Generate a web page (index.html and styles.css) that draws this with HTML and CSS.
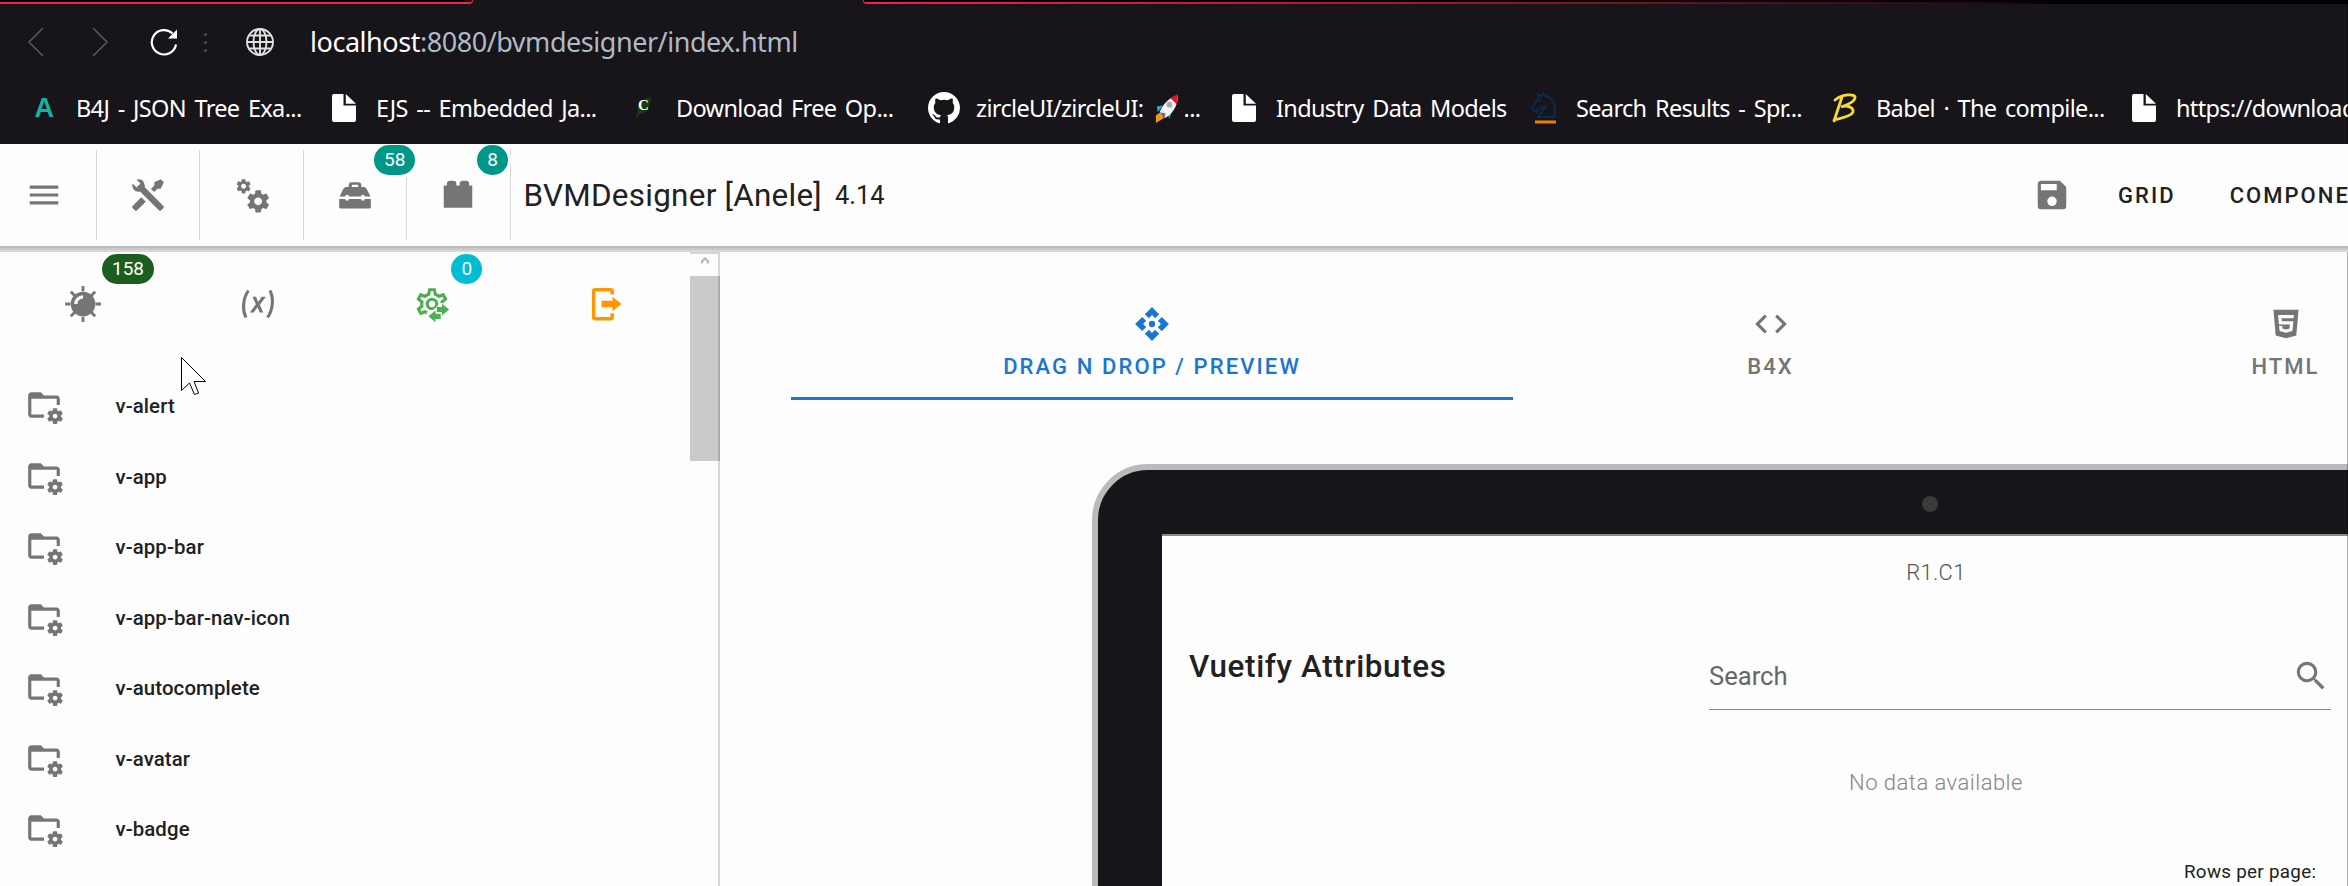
FILE: index.html
```html
<!DOCTYPE html>
<html lang="en">
<head>
  <meta charset="UTF-8">
  <title>BVMDesigner</title>
  <meta name="viewport" content="width=device-width, initial-scale=1.0">
  <link rel="stylesheet" href="styles.css">
</head>
<body>

  <!-- icons used more than once -->
  <svg class="sprite">
    <symbol id="folder-cog" viewBox="0 0 24 24"><path d="M4 4C2.89 4 2 4.89 2 6V18C2 19.11 2.9 20 4 20H12V18H4V8H20V12H22V8C22 6.89 21.1 6 20 6H12L10 4M18 14C17.87 14 17.76 14.09 17.74 14.21L17.55 15.53C17.25 15.66 16.96 15.82 16.7 16L15.46 15.5C15.35 15.5 15.22 15.5 15.15 15.63L14.15 17.36C14.09 17.47 14.11 17.6 14.21 17.68L15.27 18.5C15.25 18.67 15.24 18.83 15.24 19C15.24 19.17 15.25 19.33 15.27 19.5L14.21 20.32C14.12 20.4 14.09 20.53 14.15 20.64L15.15 22.37C15.21 22.5 15.34 22.5 15.46 22.5L16.7 22C16.96 22.18 17.24 22.35 17.55 22.47L17.74 23.79C17.76 23.91 17.86 24 18 24H20C20.11 24 20.22 23.91 20.24 23.79L20.43 22.47C20.73 22.34 21 22.18 21.27 22L22.5 22.5C22.63 22.5 22.76 22.5 22.83 22.37L23.83 20.64C23.89 20.53 23.86 20.4 23.77 20.32L22.7 19.5C22.72 19.33 22.74 19.17 22.74 19C22.74 18.83 22.73 18.67 22.7 18.5L23.76 17.68C23.85 17.6 23.88 17.47 23.82 17.36L22.82 15.63C22.76 15.5 22.63 15.5 22.5 15.5L21.27 16C21 15.82 20.73 15.65 20.42 15.53L20.23 14.21C20.22 14.09 20.11 14 20 14M19 17.5C19.83 17.5 20.5 18.17 20.5 19C20.5 19.83 19.83 20.5 19 20.5C18.16 20.5 17.5 19.83 17.5 19C17.5 18.17 18.17 17.5 19 17.5Z"/></symbol>
    <symbol id="page" viewBox="0 0 32 32"><path d="M5.500 2H15.500V13.500H28V28A2 2 0 0 1 26 30H6A2 2 0 0 1 4 28V4A2 2 0 0 1 6 2ZM17.800 2L28 11.700H17.800Z"/></symbol>
  </svg>

  <div class="browser">
    <div class="tabstrip">
      <div class="tab-left"></div>
      <div class="tab-right"></div>
    </div>
    <div class="address">
      <svg class="nav back" viewBox="0 0 18 30"><path d="M16 1L2 15L16 29"/></svg>
      <svg class="nav forward" viewBox="0 0 18 30"><path d="M2 1L16 15L2 29"/></svg>
      <svg class="reload" viewBox="0 0 28 28"><path class="arc" d="M22.500 5.500A12.200 12.200 0 1 0 26 16.500"/><path class="tip" d="M27 1.500V10.500H18Z"/></svg>
      <div class="dots"><i></i><i></i><i></i></div>
      <svg class="globe" viewBox="0 0 28 28"><circle cx="14" cy="14" r="13"/><ellipse cx="14" cy="14" rx="6.500" ry="13"/><path d="M14 1V27M1 14H27M3 7.500H25M3 20.500H25"/></svg>
      <span class="url"><b>localhost</b>:8080/bvmdesigner/index.html</span>
    </div>
    <div class="bookmarks">
      <a class="bookmark"><span class="fav fav-a">A</span><span>B4J - JSON Tree Exa...</span></a>
      <a class="bookmark"><svg class="fav"><use href="#page"/></svg><span>EJS -- Embedded Ja...</span></a>
      <a class="bookmark">
        <span class="fav fav-leaf"><svg viewBox="0 0 32 32"><path d="M23 5C13 6 8 13 9.500 20C8.500 23 8 26 8.500 28C10 25 10 23 12 22C20 21 22 14 23 5Z"/></svg><em>C</em></span>
        <span>Download Free Op...</span>
      </a>
      <a class="bookmark"><svg class="fav" viewBox="0 0 16 16"><path d="M8 0C3.580 0 0 3.580 0 8c0 3.540 2.290 6.530 5.470 7.590.4.070.550-.170.550-.380 0-.190-.010-.820-.010-1.490-2.010.370-2.530-.490-2.690-.940-.090-.230-.480-.940-.820-1.130-.280-.150-.680-.520-.010-.530.630-.010 1.080.580 1.230.820.720 1.210 1.870.870 2.330.660.070-.520.280-.870.510-1.070-1.780-.2-3.640-.890-3.640-3.950 0-.870.310-1.590.820-2.150-.080-.2-.360-1.020.080-2.120 0 0 .670-.210 2.200.820.640-.180 1.320-.270 2-.270s1.360.090 2 .270c1.530-1.040 2.200-.820 2.200-.820.440 1.100.160 1.920.080 2.120.510.560.820 1.270.820 2.150 0 3.070-1.870 3.750-3.650 3.950.290.250.540.730.540 1.480 0 1.070-.010 1.930-.010 2.200 0 .210.150.460.550.380A8.010 8.010 0 0 0 16 8c0-4.420-3.580-8-8-8z"/></svg>
        <span>zircleUI/zircleUI:</span>
        <svg class="rocket" viewBox="0 0 28 32"><path d="M4 14L10 13L5 20ZM15 21L20 17L17 27Z" fill="#2aa9e0"/><path d="M3 23L8 20L11 26L3 31Z" fill="#f7941d"/><path d="M24 3C16 5 9 13 7 20L12 26C20 22 25 14 26 4Z" fill="#f4f4f6"/><path d="M26 1L18 5L25 12Z" fill="#e81123"/><circle cx="17" cy="12" r="3" fill="#a9a9b0"/><path d="M7 20L12 26L13 21Z" fill="#6d6d74"/></svg>
        <span>...</span>
      </a>
      <a class="bookmark"><svg class="fav"><use href="#page"/></svg><span>Industry Data Models</span></a>
      <a class="bookmark"><svg class="fav knight" viewBox="0 0 32 32"><path d="M9 25H27M11 24C13 20 17 18 18 13C15 17 12 16 9 18C7 21 3 18 5 14L10 7V2L13 5L15 1L17 4C25 5 29 14 26 24M10 9L13 8M11 19L8 21"/><path class="bar" d="M7 30H28"/></svg><span>Search Results - Spr...</span></a>
      <a class="bookmark"><svg class="fav babel" viewBox="0 0 32 32"><path d="M14 5L6 29M7 8C14 2 28 1 27 6C26 11 18 13 13 15C19 13 26 15 25 20C23 25 12 26 6 28"/></svg><span>Babel · The compile...</span></a>
      <a class="bookmark"><svg class="fav"><use href="#page"/></svg><span>https://download</span></a>
    </div>
  </div>

  <div class="app-bar">
    <div class="bar-inner">
      <div class="bar-btn first"><svg class="icon" viewBox="0 0 24 24"><path d="M3,6H21V8H3V6M3,11H21V13H3V11M3,16H21V18H3V16Z"/></svg></div>
      <div class="bar-btn"><svg class="icon" viewBox="0 0 24 24"><path d="M21.710 20.290L20.290 21.710A1 1 0 0 1 18.880 21.710L7 9.850A3.810 3.810 0 0 1 6 10A4 4 0 0 1 2.220 4.700L4.760 7.240L5.290 6.710L6.710 5.290L7.240 4.760L4.700 2.220A4 4 0 0 1 10 6A3.810 3.810 0 0 1 9.850 7L21.710 18.880A1 1 0 0 1 21.710 20.290M2.290 18.880A1 1 0 0 0 2.290 20.290L3.710 21.710A1 1 0 0 0 5.120 21.710L10.590 16.250L7.760 13.420M20 2L16 4V6L13.830 8.170L15.830 10.170L18 8H20L22 4Z"/></svg></div>
      <div class="bar-btn"><svg class="icon" viewBox="0 0 24 24"><path d="M15.900,18.450C17.250,18.450 18.350,17.350 18.350,16C18.350,14.650 17.250,13.550 15.900,13.550C14.540,13.550 13.450,14.650 13.450,16C13.450,17.350 14.540,18.450 15.900,18.450M21.100,16.680L22.580,17.840C22.710,17.950 22.750,18.130 22.660,18.290L21.260,20.710C21.170,20.860 21,20.920 20.830,20.860L19.090,20.160C18.730,20.440 18.330,20.670 17.910,20.850L17.640,22.700C17.620,22.870 17.470,23 17.300,23H14.500C14.320,23 14.180,22.870 14.150,22.700L13.890,20.850C13.460,20.670 13.070,20.440 12.710,20.160L10.960,20.860C10.810,20.920 10.620,20.860 10.540,20.710L9.140,18.290C9.050,18.130 9.090,17.950 9.220,17.840L10.700,16.680L10.650,16L10.700,15.310L9.220,14.160C9.090,14.050 9.050,13.860 9.140,13.710L10.540,11.290C10.620,11.130 10.810,11.070 10.960,11.130L12.710,11.840C13.070,11.560 13.460,11.320 13.890,11.150L14.150,9.290C14.180,9.130 14.320,9 14.500,9H17.300C17.470,9 17.620,9.130 17.640,9.290L17.910,11.150C18.330,11.320 18.730,11.560 19.090,11.840L20.830,11.130C21,11.070 21.170,11.130 21.260,11.290L22.660,13.710C22.750,13.860 22.710,14.050 22.580,14.160L21.100,15.310L21.150,16L21.100,16.680M6.690,8.070C7.560,8.070 8.260,7.370 8.260,6.500C8.260,5.630 7.560,4.920 6.690,4.920A1.580,1.580 0 0,0 5.110,6.500C5.110,7.370 5.820,8.070 6.690,8.070M10.030,6.940L11,7.680C11.070,7.750 11.090,7.870 11.030,7.970L10.130,9.530C10.080,9.630 9.960,9.670 9.860,9.630L8.740,9.180L8,9.620L7.810,10.810C7.790,10.920 7.700,11 7.590,11H5.790C5.670,11 5.580,10.920 5.560,10.810L5.400,9.620L4.640,9.180L3.520,9.630C3.410,9.670 3.300,9.630 3.240,9.530L2.340,7.970C2.280,7.870 2.310,7.750 2.390,7.680L3.340,6.940L3.310,6.500L3.340,6.060L2.390,5.320C2.310,5.250 2.280,5.130 2.340,5.030L3.240,3.470C3.300,3.370 3.410,3.330 3.520,3.380L4.630,3.820L5.400,3.380L5.560,2.190C5.580,2.080 5.670,2 5.790,2H7.590C7.700,2 7.790,2.080 7.810,2.190L8,3.380L8.740,3.820L9.860,3.380C9.960,3.330 10.080,3.370 10.130,3.470L11.030,5.030C11.090,5.130 11.070,5.250 11,5.320L10.030,6.060L10.060,6.500L10.030,6.940Z"/></svg></div>
      <div class="bar-btn"><span class="badged"><svg class="icon" viewBox="0 0 24 24"><path d="M16 7V6A2 2 0 0 0 14 4H10A2 2 0 0 0 8 6V7H6.500A2 2 0 0 0 4.700 8L2.200 13H6V12H8V13H16V12H18V13H21.800L19.300 8A2 2 0 0 0 17.500 7ZM10 5.500H14V7H10ZM2 14.500H6V15.500H8V14.500H16V15.500H18V14.500H22V19.500A1 1 0 0 1 21 20.500H3A1 1 0 0 1 2 19.500Z"/></svg><span class="badge teal">58</span></span></div>
      <div class="bar-btn"><span class="badged"><svg class="icon" viewBox="0 0 24 24"><path d="M19,6V5A2,2 0 0,0 17,3H15A2,2 0 0,0 13,5V6H11V5A2,2 0 0,0 9,3H7A2,2 0 0,0 5,5V6H3V20H21V6H19Z"/></svg><span class="badge teal">8</span></span></div>
      <h1 class="title">BVMDesigner [Anele]</h1>
      <span class="version">4.14</span>
      <div class="bar-right">
        <svg class="icon" viewBox="0 0 24 24"><path d="M15,9H5V5H15M12,19A3,3 0 0,1 9,16A3,3 0 0,1 12,13A3,3 0 0,1 15,16A3,3 0 0,1 12,19M17,3H5C3.890,3 3,3.900 3,5V19A2,2 0 0,0 5,21H19A2,2 0 0,0 21,19V7L17,3Z"/></svg>
        <span class="text-btn">GRID</span>
        <span class="text-btn">COMPONENTS</span>
      </div>
    </div>
  </div>

  <div class="content">
    <div class="drawer">
      <div class="drawer-body">
        <div class="drawer-tools">
          <span class="badged"><svg class="icon mine" viewBox="0 0 24 24"><circle cx="12" cy="12" r="7.800"/><path class="spikes" d="M12 .700V4M12 20V23.300M.700 12H4M20 12H23.300M4.300 4.300L7 7M17 17L19.700 19.700M19.700 4.300L17 7M7 17L4.300 19.700"/><path class="shine" d="M6.500 12A5.500 5.500 0 0 1 12 6.500V8.500A3.500 3.500 0 0 0 8.500 12Z"/></svg><span class="badge green">158</span></span>
          <span class="badged"><svg class="icon" viewBox="0 0 24 24"><path d="M20.410,3C21.800,5.710 22.350,8.840 22,12C21.800,15.160 20.700,18.290 18.830,21L17.300,20C18.910,17.570 19.850,14.800 20,12C20.340,9.200 19.890,6.430 18.700,4L20.410,3M5.170,3L6.700,4C5.090,6.430 4.150,9.200 4,12C3.660,14.800 4.120,17.570 5.300,20L3.610,21C2.210,18.290 1.650,15.170 2,12C2.200,8.840 3.300,5.710 5.170,3M12.080,10.680L14.400,7.450H16.930L13.150,12.450L15.350,17.370H13.090L11.710,14L9.280,17.330H6.760L10.660,12.210L8.530,7.450H10.800L12.080,10.680Z"/></svg></span>
          <span class="badged"><svg class="icon transfer" viewBox="0 0 24 24"><path d="M12,8A4,4 0 0,1 16,12A4,4 0 0,1 12,16A4,4 0 0,1 8,12A4,4 0 0,1 12,8M12,10A2,2 0 0,0 10,12A2,2 0 0,0 12,14A2,2 0 0,0 14,12A2,2 0 0,0 12,10M10,22C9.750,22 9.540,21.820 9.500,21.580L9.130,18.930C8.500,18.680 7.960,18.340 7.440,17.940L4.950,18.950C4.730,19.030 4.460,18.950 4.340,18.730L2.340,15.270C2.210,15.050 2.270,14.780 2.460,14.630L4.570,12.970L4.500,12L4.570,11L2.460,9.370C2.270,9.220 2.210,8.950 2.340,8.730L4.340,5.270C4.460,5.050 4.730,4.960 4.950,5.050L7.440,6.050C7.960,5.660 8.500,5.320 9.130,5.070L9.500,2.420C9.540,2.180 9.750,2 10,2H14C14.250,2 14.460,2.180 14.500,2.420L14.870,5.070C15.500,5.320 16.040,5.660 16.560,6.050L19.050,5.050C19.270,4.960 19.540,5.050 19.660,5.270L21.660,8.730C21.790,8.950 21.730,9.220 21.540,9.370L19.430,11L19.500,12L19.430,13L21.540,14.630C21.730,14.780 21.790,15.050 21.660,15.270L19.660,18.730C19.540,18.950 19.270,19.040 19.050,18.950L16.560,17.950C16.040,18.340 15.500,18.680 14.870,18.930L14.500,21.580C14.460,21.820 14.250,22 14,22H10M11.250,4L10.880,6.610C9.680,6.860 8.620,7.500 7.850,8.390L5.440,7.350L4.690,8.650L6.800,10.200C6.400,11.370 6.400,12.640 6.800,13.800L4.680,15.360L5.430,16.660L7.860,15.620C8.630,16.500 9.680,17.140 10.870,17.380L11.240,20H12.760L13.130,17.390C14.320,17.140 15.370,16.500 16.140,15.620L18.570,16.660L19.320,15.360L17.200,13.810C17.600,12.640 17.600,11.370 17.200,10.200L19.310,8.650L18.560,7.350L16.150,8.390C15.380,7.500 14.320,6.860 13.120,6.620L12.750,4H11.250Z"/><path class="cut" d="M17.500 11.300H24V24H8.500V17.500L13 15.500Z"/><path d="M18.300 11.800L22.800 15.500L18.300 19.200V17.100H15V13.900H18.300ZM14.200 16.100L9.700 19.800L14.200 23.500V21.400H17.500V18.200H14.200Z"/></svg><span class="badge cyan">0</span></span>
          <span class="badged"><svg class="icon exit" viewBox="0 0 24 24"><path class="frame" d="M15.300 6V4A1 1 0 0 0 14.300 3H4.600A1 1 0 0 0 3.600 4V20.300A1 1 0 0 0 4.600 21.300H14.300A1 1 0 0 0 15.300 20.300V17.800"/><path class="gap" d="M13 6.500H17V17H13Z"/><path d="M8.600 10H15.500V7.400L21.200 12L15.500 16.600V14H8.600Z"/></svg></span>
        </div>
        <ul class="list">
          <li><svg class="icon"><use href="#folder-cog"/></svg><span>v-alert</span></li>
          <li><svg class="icon"><use href="#folder-cog"/></svg><span>v-app</span></li>
          <li><svg class="icon"><use href="#folder-cog"/></svg><span>v-app-bar</span></li>
          <li><svg class="icon"><use href="#folder-cog"/></svg><span>v-app-bar-nav-icon</span></li>
          <li><svg class="icon"><use href="#folder-cog"/></svg><span>v-autocomplete</span></li>
          <li><svg class="icon"><use href="#folder-cog"/></svg><span>v-avatar</span></li>
          <li><svg class="icon"><use href="#folder-cog"/></svg><span>v-badge</span></li>
        </ul>
      </div>
      <div class="scrollbar">
        <div class="scroll-cap"></div>
        <svg class="scroll-arrow" viewBox="0 0 8 8"><path d="M1 6.500V4.500L4 1.500L7 4.500V6.500"/></svg>
        <div class="scroll-thumb"></div>
      </div>
    </div>

    <div class="main">
      <div class="tabs">
        <div class="tab active">
          <svg class="icon" viewBox="0 0 24 24"><path d="M22.670,12L18.180,16.500L15.670,14L17.650,12L15.670,10.040L18.180,7.530L22.670,12M12,1.330L16.470,5.820L13.960,8.330L12,6.350L10,8.330L7.500,5.820L12,1.330M12,22.670L7.530,18.180L10.040,15.670L12,17.650L13.960,15.670L16.470,18.180L12,22.670M1.330,12L5.820,7.500L8.330,10L6.350,12L8.330,13.960L5.820,16.470L1.330,12M12,10A2,2 0 0,1 14,12A2,2 0 0,1 12,14A2,2 0 0,1 10,12A2,2 0 0,1 12,10Z"/></svg>
          <span>DRAG N DROP / PREVIEW</span>
        </div>
        <div class="tab">
          <svg class="icon" viewBox="0 0 24 24"><path d="M14.600,16.600L19.200,12L14.600,7.400L16,6L22,12L16,18L14.600,16.600M9.400,16.600L4.800,12L9.400,7.400L8,6L2,12L8,18L9.400,16.600Z"/></svg>
          <span>B4X</span>
        </div>
        <div class="tab">
          <svg class="icon" viewBox="0 0 24 24"><path d="M12,17.560L16.070,16.430L16.620,10.330H9.380L9.200,8.300H16.800L17,6.310H7L7.560,12.320H14.450L14.220,14.900L12,15.500L9.780,14.900L9.640,13.240H7.640L7.930,16.430L12,17.560M4.070,3H19.930L18.500,19.200L12,21L5.500,19.200L4.070,3Z"/></svg>
          <span>HTML</span>
        </div>
      </div>

      <div class="device">
        <div class="camera"></div>
        <div class="screen">
          <div class="cell-name">R1.C1</div>
          <div class="card-head">
            <h2>Vuetify Attributes</h2>
            <div class="search">
              <span>Search</span>
              <svg class="icon" viewBox="0 0 24 24"><path d="M9.500,3A6.500,6.500 0 0,1 16,9.500C16,11.110 15.410,12.590 14.440,13.730L14.710,14H15.500L20.500,19L19,20.500L14,15.500V14.710L13.730,14.440C12.590,15.410 11.110,16 9.500,16A6.500,6.500 0 0,1 3,9.500A6.500,6.500 0 0,1 9.500,3M9.500,5C7,5 5,7 5,9.500C5,12 7,14 9.500,14C12,14 14,12 14,9.500C14,7 12,5 9.500,5Z"/></svg>
            </div>
          </div>
          <div class="no-data">No data available</div>
          <div class="footer">Rows per page:</div>
        </div>
      </div>
    </div>
  </div>

  <svg class="cursor" viewBox="0 0 26 40"><path d="M.500 .500V33.500L8.500 26L13.500 37.500L17.500 36L13 24.500H24.500Z"/></svg>

</body>
</html>
```
FILE: styles.css
```css
:root {
  --chrome-bg: #17141a;
  --page-bg: #fdfdfd;
  --icon: #757575;
  --text: #212121;
  --primary: #1976d2;
  --accent: #fa1e4e;
}

* {
  margin: 0;
  padding: 0;
  box-sizing: border-box;
}

body {
  width: 2348px;
  height: 886px;
  overflow: hidden;
  position: relative;
  display: flex;
  flex-direction: column;
  background: var(--page-bg);
  color: var(--text);
  font-family: Roboto, sans-serif;
}

/* right window edge */
body::after {
  content: "";
  position: absolute;
  top: 0;
  right: 0;
  width: 1px;
  height: 100%;
  background: rgba(0, 0, 0, 0.3);
}

.sprite {
  position: absolute;
  width: 0;
  height: 0;
}

.icon {
  width: 38px;
  height: 38px;
  flex: none;
  display: block;
  fill: var(--icon);
}

/* Browser chrome */
.browser {
  height: 144px;
  flex: none;
  background: var(--chrome-bg);
  color: #fff;
  font-family: "Noto Sans", sans-serif;
  overflow: hidden;
}

.tabstrip {
  display: flex;
  justify-content: space-between;
  height: 4px;
}

.tab-left {
  width: 473px;
  background: #000;
  border-bottom: 2px solid var(--accent);
  border-right: 1px solid var(--accent);
  border-bottom-right-radius: 4px;
}

.tab-right {
  width: 1485px;
  background: linear-gradient(to right, var(--accent), #a5152f 38%, #2a0714 75%, #030006 80%);
  border-bottom-left-radius: 4px;
}

.tab-right::before {
  content: "";
  display: block;
  height: 2px;
  margin-left: 1px;
  background: #030006;
}

.address {
  display: flex;
  align-items: center;
  height: 76px;
  padding-left: 27px;
}

.nav {
  width: 18px;
  height: 30px;
  fill: none;
  stroke: #5a575d;
  stroke-width: 1.6;
}

.forward {
  margin-left: 46px;
}

.reload {
  width: 28px;
  height: 28px;
  margin-left: 41px;
}

.reload .arc {
  fill: none;
  stroke: #fff;
  stroke-width: 2.2;
}

.reload .tip {
  fill: #fff;
}

.dots {
  display: flex;
  flex-direction: column;
  gap: 5px;
  margin-left: 26px;
}

.dots i {
  width: 3px;
  height: 3px;
  border-radius: 50%;
  background: #4f4c52;
}

.globe {
  width: 28px;
  height: 28px;
  margin-left: 39px;
  fill: none;
  stroke: #e0e0e0;
  stroke-width: 1.9;
}

.url {
  margin-left: 36px;
  padding-bottom: 1px;
  font-size: 27px;
  letter-spacing: -0.46px;
  color: #aebbc5;
  white-space: nowrap;
}

.url b {
  font-weight: 400;
  color: #fff;
}

.bookmarks {
  display: flex;
  height: 56px;
  padding-left: 28px;
}

.bookmark {
  width: 300px;
  flex: none;
  display: flex;
  align-items: center;
  font-size: 23.5px;
  letter-spacing: -0.65px;
  word-spacing: 3px;
  white-space: nowrap;
}

.fav {
  width: 32px;
  height: 32px;
  margin-right: 16px;
  flex: none;
  fill: #fff;
}

.fav-a {
  font: 700 27px/32px "Liberation Sans", sans-serif;
  text-align: center;
  color: #11b5a8;
}

.fav-leaf {
  position: relative;
}

.fav-leaf svg {
  width: 32px;
  height: 32px;
  fill: #163d0b;
}

.fav-leaf em {
  position: absolute;
  left: 10px;
  top: 4px;
  font: 700 15px/18px "Liberation Serif", serif;
}

.rocket {
  width: 27px;
  height: 31px;
  margin: 0 4px 0 9px;
}

.knight {
  fill: none;
  stroke: #0a2a4c;
  stroke-width: 2;
}

.knight .bar {
  stroke: #f07d00;
  stroke-width: 3;
}

.babel {
  fill: none;
  stroke: #f5da3a;
  stroke-width: 2.8;
  stroke-linecap: round;
}

/* App bar */
.app-bar {
  height: 108px;
  flex: none;
  border-bottom: 2px solid #d8d8d8;
  position: relative;
  z-index: 2;
}

.app-bar::after {
  content: "";
  display: block;
  height: 4px;
  background: linear-gradient(#bbb 50%, #c9c9c9 50%);
}

.bar-inner {
  display: flex;
  align-items: center;
  height: 102px;
  padding: 6px 0;
  overflow: hidden;
  background: var(--page-bg);
}

.bar-btn {
  width: 103.4px;
  height: 90px;
  flex: none;
  display: flex;
  align-items: center;
  justify-content: center;
  border-right: 1px solid #d6d6d6;
}

.bar-btn.first {
  width: 97px;
  padding-right: 8px;
}

.badged {
  position: relative;
}

.badge {
  position: absolute;
  left: 38px;
  bottom: 39px;
  min-width: 30px;
  height: 30px;
  padding: 0 10px;
  border-radius: 15px;
  color: #fff;
  font-size: 19px;
  line-height: 29px;
  text-align: center;
  box-shadow: 0 0 0 3px var(--page-bg);
}

.teal {
  background: #009688;
}

.green {
  background: #1b5e20;
}

.cyan {
  background: #00bcd4;
}

.title {
  margin-left: 13px;
  font-size: 31.4px;
  font-weight: 400;
  letter-spacing: 0.28px;
  white-space: nowrap;
}

.version {
  margin-left: 13px;
  font-size: 25.4px;
}

.bar-right {
  display: flex;
  align-items: center;
  margin-left: auto;
  width: 315px;
  white-space: nowrap;
}

.text-btn {
  margin-left: 47px;
  font-size: 22px;
  font-weight: 500;
  letter-spacing: 2.05px;
}

.text-btn + .text-btn {
  margin-left: 54px;
}

/* Drawer */
.content {
  flex: 1;
  display: flex;
  min-height: 0;
}

.drawer {
  width: 720px;
  flex: none;
  display: flex;
  position: relative;
}

.drawer::after {
  content: "";
  position: absolute;
  top: 0;
  right: 0;
  width: 2px;
  height: 100%;
  background: rgba(0, 0, 0, 0.15);
}

.drawer-body {
  width: 690px;
}

.drawer-tools {
  display: flex;
  align-items: flex-start;
  gap: 136.7px;
  padding: 33px 0 0 64px;
  height: 118px;
}

.mine .spikes {
  fill: none;
  stroke: var(--icon);
  stroke-width: 1.8;
}

.mine .shine,
.transfer .cut,
.exit .gap {
  fill: var(--page-bg);
}

.transfer {
  fill: #4caf50;
}

.exit {
  fill: #ff9800;
}

.exit .frame {
  fill: none;
  stroke: #ff9800;
  stroke-width: 2.2;
}

.list {
  list-style: none;
}

.list li {
  display: flex;
  align-items: center;
  gap: 52px;
  height: 70.5px;
  padding-left: 25.4px;
  font-size: 20.4px;
  font-weight: 500;
  letter-spacing: 0.12px;
}

.list span {
  padding-top: 2px;
}

.scrollbar {
  width: 30px;
  display: flex;
  flex-direction: column;
}

.scroll-cap {
  height: 2px;
  width: 28px;
  background: #d4d4d4;
}

.scroll-arrow {
  width: 8px;
  height: 8px;
  margin: 3px 0 11px 11px;
  fill: none;
  stroke: #b5b5b5;
  stroke-width: 2;
}

.scroll-thumb {
  height: 185px;
  background: #cacaca;
}

/* Main area */
.main {
  flex: 1;
  min-width: 0;
  overflow: hidden;
}

.tabs {
  display: flex;
  padding: 34px 0 0 71px;
  height: 148px;
}

.tab {
  width: 515px;
  flex: none;
  display: flex;
  flex-direction: column;
  align-items: center;
  padding-top: 19px;
  color: var(--icon);
  font-size: 22px;
  font-weight: 500;
  letter-spacing: 2.1px;
}

.tab .icon {
  margin-bottom: 11px;
}

.tab.active {
  width: 722px;
  color: var(--primary);
  border-bottom: 3px solid var(--primary);
}

.tab.active .icon {
  fill: var(--primary);
}

.device {
  width: 1676px;
  height: 1000px;
  margin: 64px 0 0 372px;
  border: 6px solid #bababa;
  border-radius: 56px;
  background: var(--chrome-bg);
  padding: 26px 64px 64px;
}

.camera {
  width: 16px;
  height: 16px;
  margin: 0 auto 22px;
  border-radius: 50%;
  background: #3a3a3a;
}

.screen {
  height: 900px;
  background: var(--page-bg);
  border-top: 2px solid #8c878b;
}

.cell-name {
  margin-top: 24px;
  font-size: 22px;
  font-weight: 300;
  text-align: center;
  letter-spacing: 0.3px;
  padding-left: 12px;
  color: #555;
}

.card-head {
  display: flex;
  padding-left: 27px;
  margin-top: 57px;
}

.card-head h2 {
  width: 520px;
  font-size: 31.4px;
  font-weight: 500;
  letter-spacing: 0.65px;
  line-height: 50px;
}

.search {
  width: 622px;
  height: 68px;
  display: flex;
  align-items: center;
  justify-content: space-between;
  padding: 1px 1px 0 0;
  border-bottom: 1px solid #8a8a8a;
  font-size: 25.6px;
  color: #666;
}

.no-data {
  margin-top: 60px;
  padding-left: 12px;
  text-align: center;
  font-size: 22px;
  font-weight: 300;
  letter-spacing: 0.48px;
  color: #858585;
}

.footer {
  margin-top: 66px;
  padding-left: 1022px;
  font-size: 18.8px;
  letter-spacing: 0.3px;
}

.cursor {
  position: absolute;
  left: 181px;
  top: 357px;
  width: 26px;
  height: 40px;
  fill: #fff;
  stroke: #000;
  stroke-width: 1;
  z-index: 3;
}
```
